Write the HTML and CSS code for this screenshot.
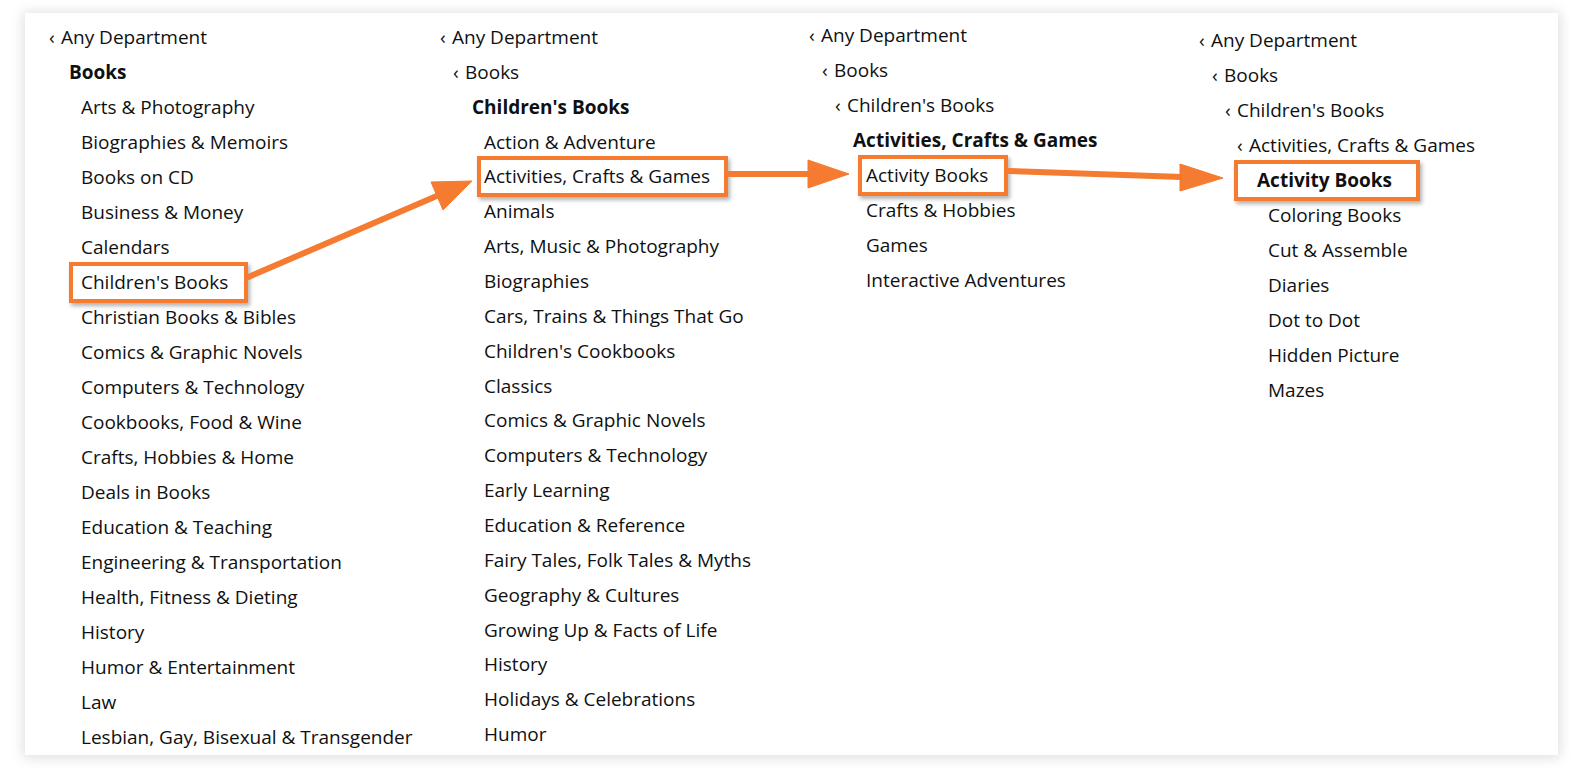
FILE: index.html
```html
<!DOCTYPE html>
<html lang="en">
<head>
  <meta charset="UTF-8" />
  <title>Browse Departments - Activity Books</title>
  <link rel="stylesheet" href="styles.css">
</head>
<body>
  <div class="stage">
    <div class="card">
      <!-- step 1: Books -->
      <ul class="col col-1">
        <li class="back"><span class="chev">&lsaquo;</span>Any Department</li>
        <li class="current">Books</li>
        <li class="kid">Arts &amp; Photography</li>
        <li class="kid">Biographies &amp; Memoirs</li>
        <li class="kid">Books on CD</li>
        <li class="kid">Business &amp; Money</li>
        <li class="kid">Calendars</li>
        <li class="mark mark-1">Children's Books</li>
        <li class="kid">Christian Books &amp; Bibles</li>
        <li class="kid">Comics &amp; Graphic Novels</li>
        <li class="kid">Computers &amp; Technology</li>
        <li class="kid">Cookbooks, Food &amp; Wine</li>
        <li class="kid">Crafts, Hobbies &amp; Home</li>
        <li class="kid">Deals in Books</li>
        <li class="kid">Education &amp; Teaching</li>
        <li class="kid">Engineering &amp; Transportation</li>
        <li class="kid">Health, Fitness &amp; Dieting</li>
        <li class="kid">History</li>
        <li class="kid">Humor &amp; Entertainment</li>
        <li class="kid">Law</li>
        <li class="kid">Lesbian, Gay, Bisexual &amp; Transgender</li>
      </ul>

      <!-- step 2: Children's Books -->
      <ul class="col col-2">
        <li class="back"><span class="chev">&lsaquo;</span>Any Department</li>
        <li class="back l1"><span class="chev">&lsaquo;</span>Books</li>
        <li class="current">Children's Books</li>
        <li class="kid">Action &amp; Adventure</li>
        <li class="mark mark-2">Activities, Crafts &amp; Games</li>
        <li class="kid">Animals</li>
        <li class="kid">Arts, Music &amp; Photography</li>
        <li class="kid">Biographies</li>
        <li class="kid">Cars, Trains &amp; Things That Go</li>
        <li class="kid">Children's Cookbooks</li>
        <li class="kid">Classics</li>
        <li class="kid">Comics &amp; Graphic Novels</li>
        <li class="kid">Computers &amp; Technology</li>
        <li class="kid">Early Learning</li>
        <li class="kid">Education &amp; Reference</li>
        <li class="kid">Fairy Tales, Folk Tales &amp; Myths</li>
        <li class="kid">Geography &amp; Cultures</li>
        <li class="kid">Growing Up &amp; Facts of Life</li>
        <li class="kid">History</li>
        <li class="kid">Holidays &amp; Celebrations</li>
        <li class="kid">Humor</li>
      </ul>

      <!-- step 3: Activities, Crafts & Games -->
      <ul class="col col-3">
        <li class="back"><span class="chev">&lsaquo;</span>Any Department</li>
        <li class="back l1"><span class="chev">&lsaquo;</span>Books</li>
        <li class="back l2"><span class="chev">&lsaquo;</span>Children's Books</li>
        <li class="current">Activities, Crafts &amp; Games</li>
        <li class="mark mark-3">Activity Books</li>
        <li class="kid">Crafts &amp; Hobbies</li>
        <li class="kid">Games</li>
        <li class="kid">Interactive Adventures</li>
      </ul>

      <!-- step 4: Activity Books -->
      <ul class="col col-4">
        <li class="back"><span class="chev">&lsaquo;</span>Any Department</li>
        <li class="back l1"><span class="chev">&lsaquo;</span>Books</li>
        <li class="back l2"><span class="chev">&lsaquo;</span>Children's Books</li>
        <li class="back l3"><span class="chev">&lsaquo;</span>Activities, Crafts &amp; Games</li>
        <li class="current mark mark-4">Activity Books</li>
        <li class="kid">Coloring Books</li>
        <li class="kid">Cut &amp; Assemble</li>
        <li class="kid">Diaries</li>
        <li class="kid">Dot to Dot</li>
        <li class="kid">Hidden Picture</li>
        <li class="kid">Mazes</li>
      </ul>
    </div>

    <svg class="arrows" width="1570" height="770" viewBox="0 0 1570 770">
      <g fill="#f47b2f" stroke="#f47b2f">
        <line x1="246" y1="278" x2="439" y2="195" stroke-width="6" />
        <polygon points="472,181 443,210 431,182" stroke-width="1" stroke-linejoin="round" />

        <line x1="728" y1="174" x2="810" y2="174" stroke-width="6" />
        <polygon points="849,174 808,160 808,188" stroke-width="1" stroke-linejoin="round" />

        <line x1="1008" y1="171" x2="1182" y2="177" stroke-width="6" />
        <polygon points="1223,178 1180,164 1180,191" stroke-width="1" stroke-linejoin="round" />
      </g>
    </svg>
  </div>
</body>
</html>
```

FILE: styles.css
```css
:root {
  --text: #0f1111;
  --orange: #f47b2f;
  --row: 35px;
}

* {
  box-sizing: border-box;
  margin: 0;
  padding: 0;
}

body {
  background: #fff;
  color: var(--text);
  font-family: "Open Sans", "Noto Sans", sans-serif;
  font-size: 19px;
}

.stage {
  position: relative;
  width: 1570px;
  height: 770px;
  padding: 13px 12px 15px 25px;
}

.card {
  height: 742px;
  background: #fff;
  box-shadow: 0 1px 12px 2px rgba(0, 0, 0, 0.13);
  padding: 7px 0 0 24px;
  display: grid;
  grid-template-columns: 391px 369px 390px 1fr;
  align-items: start;
}

.col {
  list-style: none;
}

.col li {
  height: var(--row);
  line-height: var(--row);
  white-space: nowrap;
}

.col-2 li {
  height: 34.85px;
  line-height: 34.85px;
}

.col-3 {
  margin-top: -2px;
}

.col-4 {
  margin-top: 3px;
}

.col-1 { --cur: 20px; --kid: 32px; }
.col-2 { --cur: 32px; --kid: 44px; }
.col-3 { --cur: 44px; --kid: 57px; }
.col-4 { --cur: 57px; --kid: 69px; }

.chev {
  display: inline-block;
  width: 12px;
  font-size: 19px;
}

.back.l1 { padding-left: 13px; }
.back.l2 { padding-left: 26px; }
.back.l3 { padding-left: 38px; }

.current {
  padding-left: var(--cur);
  font-weight: 700;
}

.kid {
  padding-left: var(--kid);
}

/* orange call-out boxes */
.col li.mark {
  height: 41px;
  line-height: 33px;
  margin: -3px 0;
  border: 4px solid var(--orange);
  box-shadow: 2px 3px 4px rgba(0, 0, 0, 0.3);
  position: relative;
  background: #fff;
}

.col li.mark-1 { width: 179px; margin-left: 20px; padding-left: 8px; }
.col li.mark-2 { width: 251px; margin-left: 37px; padding-left: 3px; }
.col li.mark-3 { width: 150px; margin-left: 49px; padding-left: 4px; }
.col li.mark-4 { width: 186px; margin-left: 35px; padding-left: 19px; }

.arrows {
  position: absolute;
  top: 0;
  left: 0;
  pointer-events: none;
}
```
